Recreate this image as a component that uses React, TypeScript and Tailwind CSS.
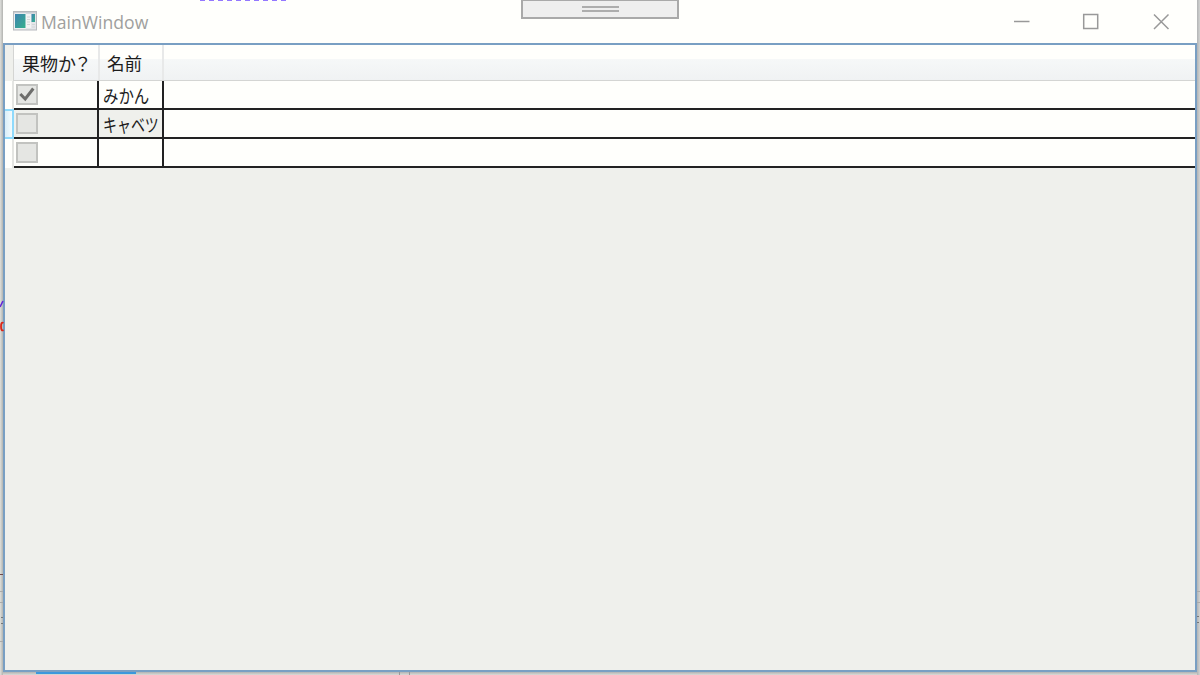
const rows = [
    { checked: true, name: "みかん", selected: false, stretch: "scale-x-[0.83]" },
    { checked: false, name: "キャベツ", selected: true, stretch: "scale-x-[0.75]" },
    { checked: false, name: "", selected: false, stretch: "" }
];

const AppIcon = () => (
    <svg width="24" height="20" viewBox="0 0 24 20" className="shrink-0">
        <defs>
            <linearGradient id="pane" x1="0" y1="0" x2="1" y2="1">
                <stop offset="0" stopColor="#3f83b0" />
                <stop offset="1" stopColor="#35b08d" />
            </linearGradient>
        </defs>
        <rect x="0.5" y="0.5" width="23" height="18.5" fill="#e4e6e9" stroke="#b7babd" />
        <rect x="1" y="1" width="22" height="1.5" fill="#c9cdd3" />
        <rect x="1.5" y="2.5" width="11.5" height="15" fill="#f7f9f9" />
        <rect x="2" y="3" width="10.5" height="14" fill="url(#pane)" />
        <rect x="13" y="3" width="5" height="14" fill="#f3f4f4" />
        <path d="M14 6h3M14 8.5h3M14 11h3M14 13.5h3" stroke="#d3d6d6" />
        <rect x="18.5" y="3" width="3.5" height="8" fill="url(#pane)" />
        <path d="M19 13.5h3M19 16h3" stroke="#d3d6d6" />
    </svg>
);

const TitleBar = () => (
    <header className="flex h-[43px] shrink-0 items-start">
        <div className="flex h-[42px] items-center gap-1 pl-[10px]">
            <AppIcon />
            <span className="pt-px text-[17.6px] leading-6 text-[#a0a09e] font-['Open_Sans',sans-serif]">MainWindow</span>
        </div>
        <div className="ml-auto flex h-[43px] items-center pr-[27px]">
            <svg width="156" height="20" viewBox="0 0 156 20" fill="none" stroke="#999" strokeWidth="1.5">
                <path d="M0 9.5h15.5" />
                <rect x="69.7" y="2.5" width="14" height="14" />
                <path d="M140 2.5l14.5 14.5M154.5 2.5L140 17" />
            </svg>
        </div>
    </header>
);

const CheckBox = ({ checked }: { checked: boolean }) => (
    <div className="flex h-[21px] w-[22px] items-center justify-center border-2 border-[#c2c3c0] bg-[#e5e6e3]">
        {checked && (
            <svg width="16" height="15" viewBox="0 0 16 15" fill="none" stroke="#6e6e6c" strokeWidth="3" className="shrink-0">
                <path d="M1.3 7l4.9 5L14.3 1.5" />
            </svg>
        )}
    </div>
);

const DataGrid = () => (
    <main className="flex min-h-0 flex-1 flex-col border-2 border-[#799fc3] bg-[#eff0ec] font-['Noto_Sans_CJK_JP',sans-serif] text-[#1c1c1c]">
        <div className="flex h-9 shrink-0">
            <div className="w-[8px] shrink-0 bg-[#eff0ec]" />
            <div className="flex flex-1 border-b border-l border-[#d4d5d3] bg-[linear-gradient(to_bottom,#fffffc_0px,#fffffc_14px,#f6f8f8_14px,#f0f2f3_35px)]">
                <div className="flex w-[86px] items-center border-r-2 border-[#e8e9e9] pl-[8px] pt-[2px] text-[18px] whitespace-nowrap">
                    <span>果物</span>
                    <span className="tracking-[-2.2px]">か？</span>
                </div>
                <div className="flex w-[64px] items-center border-r-2 border-[#e8e9e9] pl-[7px] pt-[2px] text-[17.6px]">名前</div>
            </div>
        </div>
        {rows.map((row, idx) => (
            <div key={idx} className="flex h-[29px] shrink-0">
                <div className={row.selected
                    ? "-mt-px w-[9px] shrink-0 border-y-2 border-r-2 border-[#8fdafc] bg-gradient-to-r from-[#d9effa] to-[#f4fbfd]"
                    : "w-[9px] shrink-0 border-r-2 border-[#e4e5e2] bg-[#fffffc]"} />
                <div className="flex flex-1 border-b-2 border-[#222] bg-[#fffffc]">
                    <div className={`flex w-[85px] border-r-2 border-[#222] pl-[2px] pt-[3px] ${row.selected ? "bg-[#eff0ec]" : ""}`}>
                        <CheckBox checked={row.checked} />
                    </div>
                    <div className={`flex w-[65px] items-center border-r-2 border-[#222] pl-[4px] text-[18.6px] leading-6 whitespace-nowrap ${row.selected ? "bg-[#eff0ec]" : ""}`}>
                        <span className={`origin-left ${row.stretch}`}>{row.name}</span>
                    </div>
                </div>
            </div>
        ))}
    </main>
);

const App = () => (
    <div className="relative flex h-[675px] w-[1200px] overflow-hidden bg-[#c6c7c5]">
        <div className="flex w-[3px] shrink-0 flex-col bg-gradient-to-r from-[#dfe0dc] to-[#b3b4b0]">
            <div className="h-[574px]" />
            <div className="h-px bg-[#714949]" />
            <div className="mt-[16px] h-px bg-[#aaa]" />
            <div className="mt-[10px] h-px bg-[#aaa]" />
            <div className="ml-px mt-[14px] h-px bg-[#777]" />
            <div className="ml-px mt-[5px] h-px bg-[#777]" />
            <div className="mt-[17px] h-px bg-[#aaa]" />
        </div>
        <div className="flex min-w-0 flex-1 flex-col">
            <div className="flex h-[672px] flex-col bg-[#fffffc]">
                <TitleBar />
                <DataGrid />
            </div>
            <div className="flex h-[3px] bg-gradient-to-b from-[#b2b3b2] to-[#dadbd8]">
                <div className="ml-[33px] h-[2px] w-[100px] bg-[#3c98dc]" />
                <div className="ml-[263px] w-[11px] border-x border-[#999]" />
            </div>
        </div>
        <div className="flex w-[3px] shrink-0 flex-col bg-gradient-to-r from-[#b2b4b5] to-[#d2d3d2]">
            <div className="mt-[591px] h-px bg-[#aaa]" />
            <div className="mt-[10px] h-px bg-[#aaa]" />
            <div className="mr-px mt-[13px] h-px bg-[#777]" />
            <div className="mr-px mt-[5px] h-px bg-[#777]" />
        </div>

        {/* slivers of the editor behind the window */}
        <div className="absolute left-[200px] top-0 h-px w-[86px] bg-[repeating-linear-gradient(to_right,#9478ff_0px,#9478ff_5px,transparent_5px,transparent_9px)]" />
        <svg width="4" height="36" viewBox="0 0 4 36" fill="none" className="absolute left-0 top-[298px]">
            <path d="M0 9L3 3" stroke="#6425d9" strokeWidth="1.6" />
            <path d="M3.5 25Q1 23.5 1 28.5T3.5 32" stroke="#dd2617" strokeWidth="1.8" />
        </svg>

        {/* debug toolbar handle */}
        <div className="absolute left-[521px] top-[-1px] flex h-[20px] w-[158px] items-center justify-center border-2 border-[#a9a9a9] bg-[#eeeeee]">
            <div className="h-[6px] w-[37px] border-y-2 border-[#adadad]" />
        </div>
    </div>
);

export default App;
